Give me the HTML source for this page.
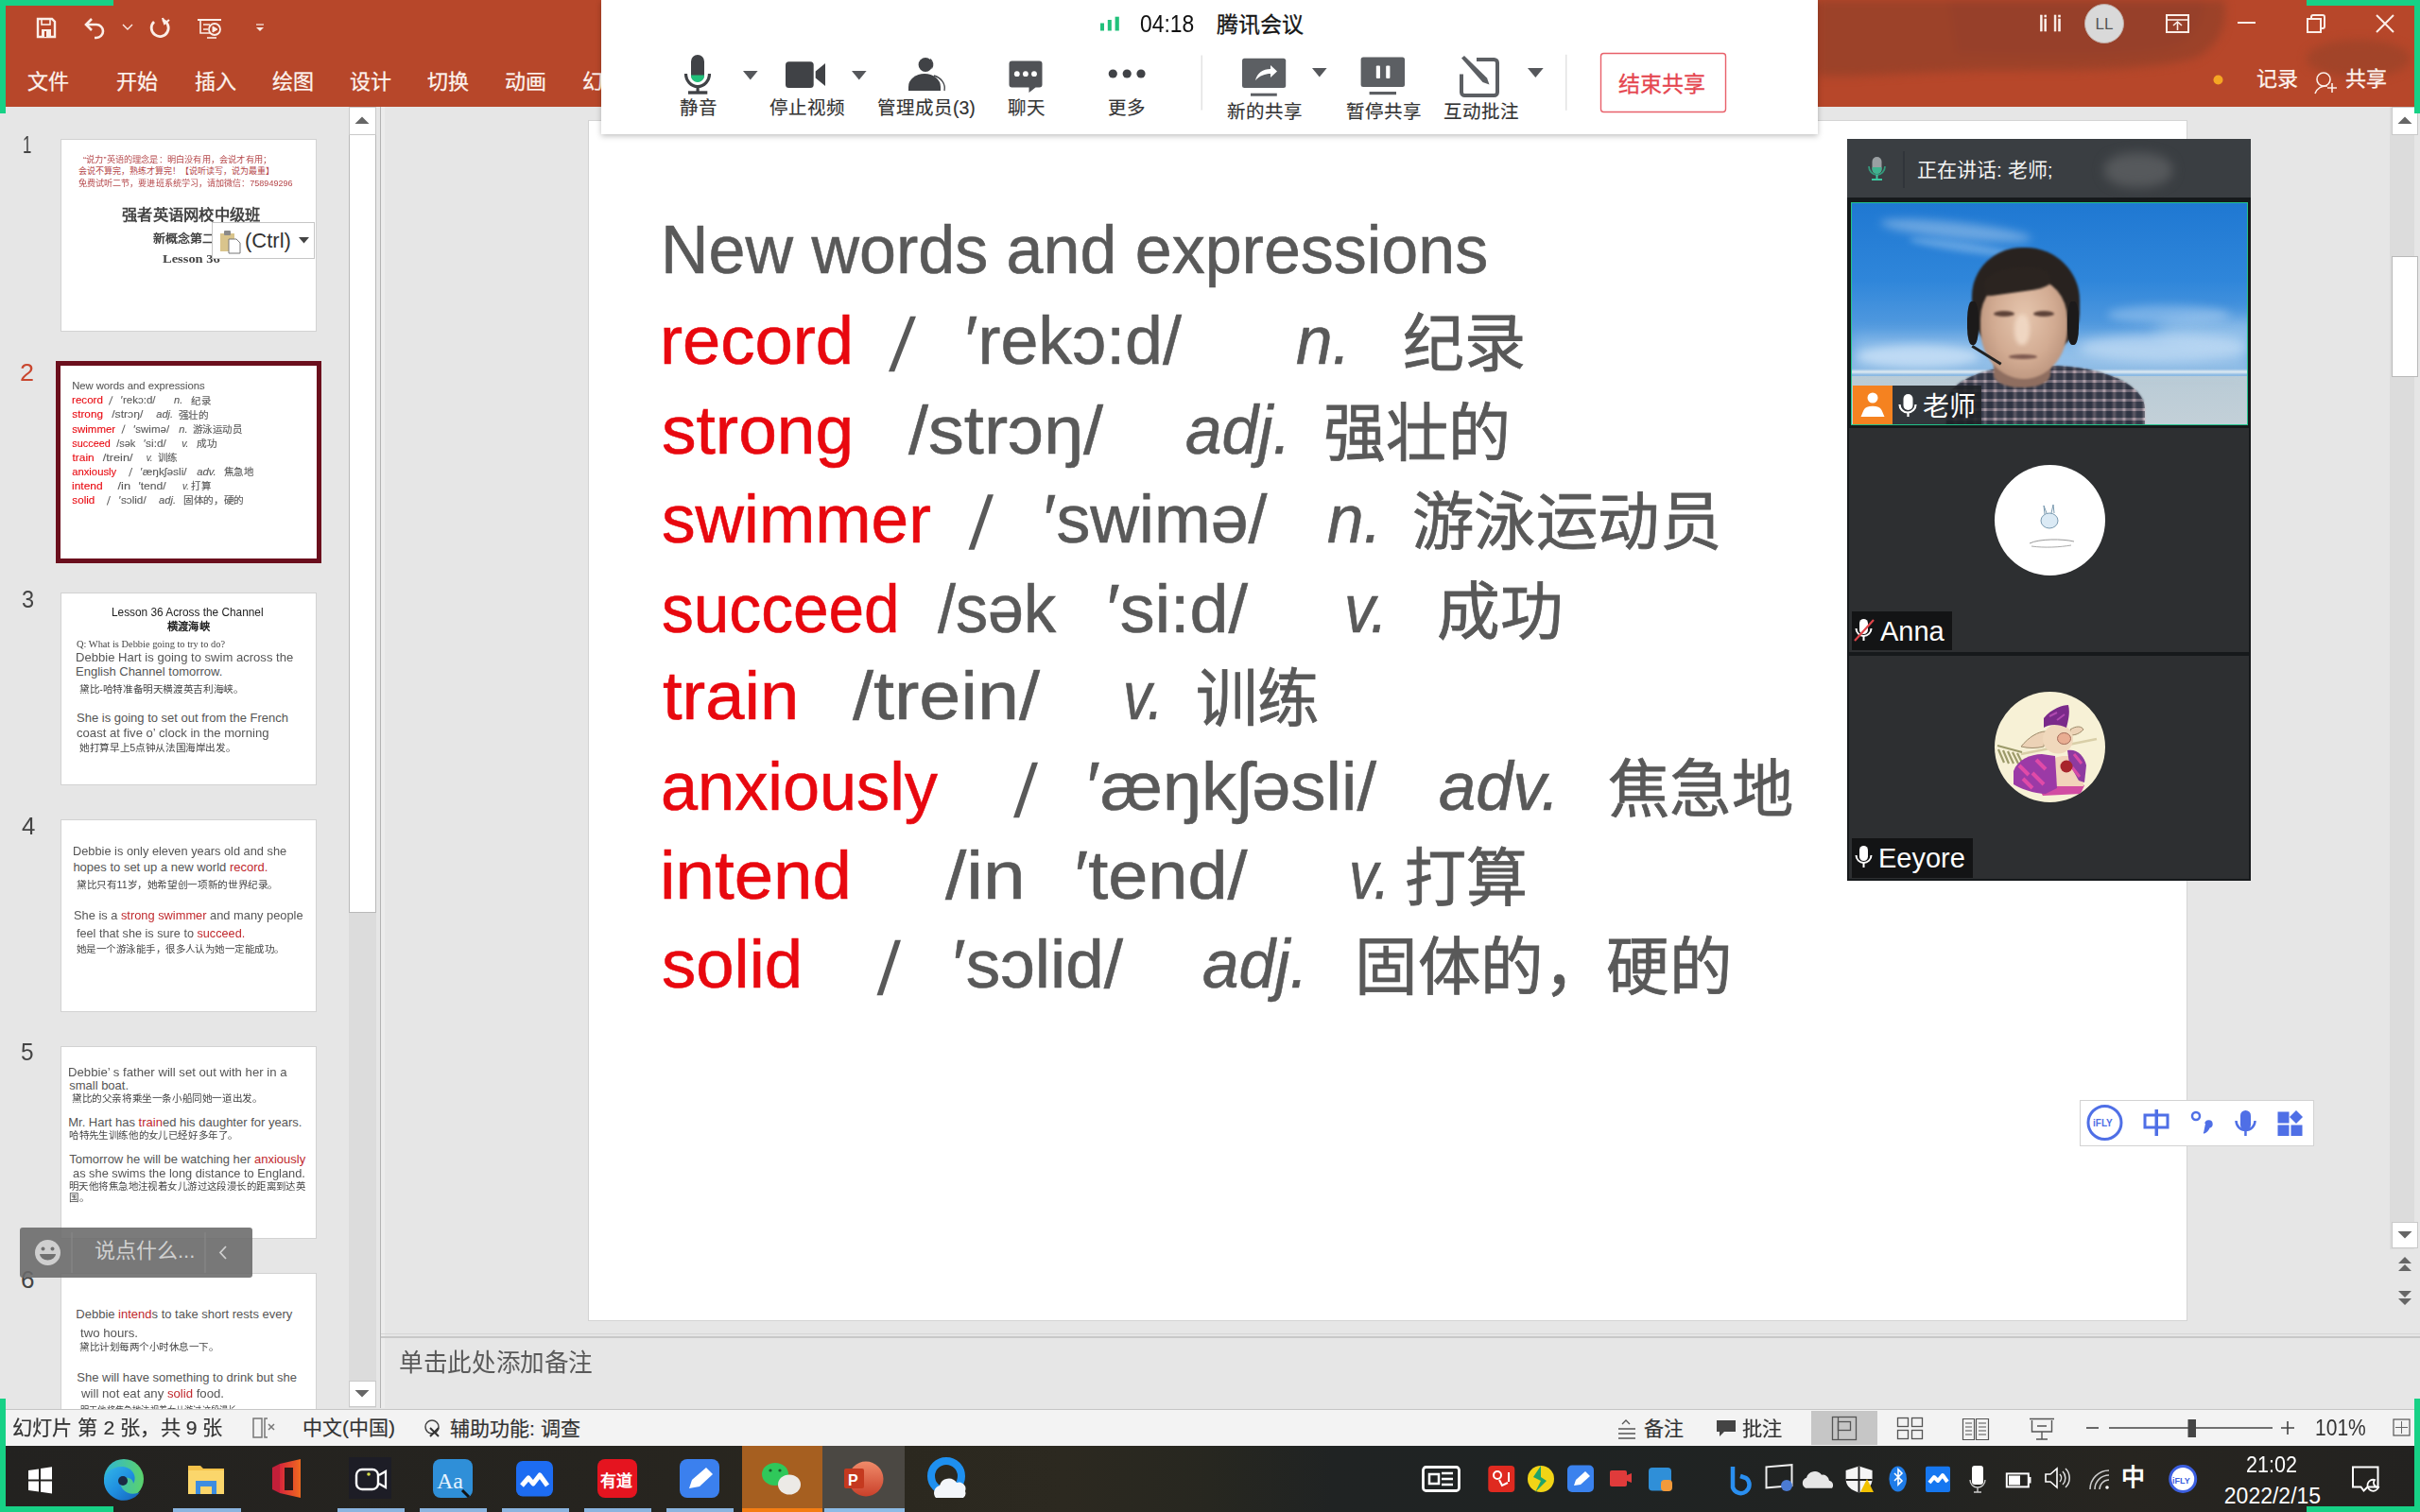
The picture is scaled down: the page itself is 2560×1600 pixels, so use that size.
<!DOCTYPE html>
<html lang="zh-CN"><head><meta charset="utf-8">
<style>
*{margin:0;padding:0;box-sizing:border-box}
html,body{width:2560px;height:1600px;overflow:hidden}
body{position:relative;background:#e6e6e6;font-family:"Liberation Sans",sans-serif;color:#333}
.a{position:absolute}
.t{position:absolute;white-space:nowrap;line-height:1}
/* title bar */
#title{left:0;top:0;width:2560px;height:113px;background:#b7472a}
.green{background:#17d186}
/* slide text */
.st{position:absolute;white-space:nowrap;line-height:1;font-size:72px;transform-origin:0 0;-webkit-text-stroke-width:.6px}
.r{color:#e8080f}
.g{color:#595959}
.cj{-webkit-text-stroke:0.8px #595959}
</style></head><body>
<!-- title bar -->
<div id="title" class="a" style="overflow:hidden">
 <svg class="a" style="left:0;top:0;filter:blur(5px)" width="2560" height="113" viewBox="0 0 2560 113">
  <path d="M1923 -10H2350C2360 20 2350 50 2320 62C2250 80 2130 72 2060 76C2000 78 1960 82 1923 80Z" fill="#9c4229"/>
  <path d="M2060 -10H2330C2335 20 2320 45 2290 52C2220 62 2120 58 2070 56Z" fill="#97402a"/>
  <ellipse cx="2495" cy="62" rx="55" ry="20" fill="#a24429"/>
 </svg>
</div>
<!--TB-->
<svg class="a" style="left:0;top:0" width="2560" height="113" viewBox="0 0 2560 113" fill="none" stroke="#fbeee8" stroke-width="2.2">
 <!-- save -->
 <path d="M40 20h15l3 3v16h-18z" fill="none" stroke-width="2.4"/>
 <rect x="44" y="20" width="9" height="6" stroke-width="1.6"/>
 <rect x="44" y="31" width="10" height="8" fill="#fbeee8" stroke="none"/>
 <rect x="47" y="33" width="2" height="6" fill="#b7472a" stroke="none"/>
 <!-- undo -->
 <path d="M92 26h10a7 7 0 0 1 0 14h-2" stroke-width="2.6"/>
 <path d="M97 20l-6 6 6 6" stroke-width="2.6"/>
 <path d="M130 26l5 5 5-5" stroke-width="1.4"/>
 <!-- redo circle -->
 <path d="M163 23a9 9 0 1 0 9 -2" stroke-width="2.8"/>
 <path d="M172 19l2 6 5-4" stroke-width="2.2"/>
 <!-- slideshow -->
 <path d="M209 21h25" stroke-width="2"/>
 <path d="M212 21v14h10" stroke-width="1.6"/>
 <path d="M215 26h7M215 31h5" stroke-width="1.4"/>
 <circle cx="227" cy="31" r="6" stroke-width="1.8"/>
 <path d="M225 28l5 3-5 3z" fill="#fbeee8" stroke-width="1"/>
 <path d="M219 40h10" stroke-width="1.6"/>
 <path d="M271 26h8" stroke-width="1.2"/><path d="M271 29l4 4 4-4z" fill="#fbeee8" stroke="none"/>
 <!-- right controls -->
 <rect x="2292" y="16" width="23" height="18" stroke-width="2"/>
 <path d="M2292 21h23" stroke-width="1.6"/>
 <path d="M2303.5 23v9M2299 27l4.5-4 4.5 4" stroke-width="1.6"/>
 <path d="M2367 24h19" stroke-width="2"/>
 <rect x="2441" y="20" width="14" height="14" stroke-width="2"/>
 <path d="M2445 20v-2a2 2 0 0 1 2-2h10a2 2 0 0 1 2 2v10a2 2 0 0 1 -2 2h-2" stroke-width="2"/>
 <path d="M2514 16l18 18M2532 16l-18 18" stroke-width="2"/>
 <circle cx="2346.5" cy="84.5" r="5" fill="#f5a623" stroke="none"/>
 <circle cx="2458" cy="84" r="7" stroke-width="1.6"/>
 <path d="M2449 99a12 12 0 0 1 13-8" stroke-width="1.6"/>
 <path d="M2467 88v10M2462 93h10" stroke-width="1.6"/>
</svg>
<div class="t" style="left:29px;top:76px;font-size:22px;color:#fdf3ee;-webkit-text-stroke:.25px #fdf3ee">文件</div>
<div class="t" style="left:123px;top:76px;font-size:22px;color:#fdf3ee;-webkit-text-stroke:.25px #fdf3ee">开始</div>
<div class="t" style="left:206px;top:76px;font-size:22px;color:#fdf3ee;-webkit-text-stroke:.25px #fdf3ee">插入</div>
<div class="t" style="left:288px;top:76px;font-size:22px;color:#fdf3ee;-webkit-text-stroke:.25px #fdf3ee">绘图</div>
<div class="t" style="left:370px;top:76px;font-size:22px;color:#fdf3ee;-webkit-text-stroke:.25px #fdf3ee">设计</div>
<div class="t" style="left:452px;top:76px;font-size:22px;color:#fdf3ee;-webkit-text-stroke:.25px #fdf3ee">切换</div>
<div class="t" style="left:534px;top:76px;font-size:22px;color:#fdf3ee;-webkit-text-stroke:.25px #fdf3ee">动画</div>
<div class="t" style="left:616px;top:76px;font-size:22px;color:#fdf3ee;-webkit-text-stroke:.25px #fdf3ee">幻</div>
<div class="t" style="left:2157px;top:13px;font-size:24px;color:#fdf3ee;-webkit-text-stroke:.6px #fdf3ee;transform:scaleX(.85);transform-origin:0 0">li li</div>
<div class="a" style="left:2205px;top:4px;width:42px;height:42px;border-radius:50%;background:#d9d9d9;color:#555;font-size:17px;border:1px solid #c0a8a0;line-height:42px;text-align:center">LL</div>
<div class="t" style="left:2387px;top:73px;font-size:22px;color:#fdf3ee;-webkit-text-stroke:.25px #fdf3ee">记录</div>
<div class="t" style="left:2481px;top:73px;font-size:22px;color:#fdf3ee;-webkit-text-stroke:.25px #fdf3ee">共享</div>

<!--/TB-->

<!-- thumbnail pane -->
<div id="thumbs" class="a" style="left:0;top:113px;width:402px;height:1379px;background:#e6e6e6"></div>

<!-- main slide -->
<div id="slide" class="a" style="left:623px;top:128px;width:1690px;height:1269px;background:#fff;box-shadow:0 0 0 1px #d4d4d4"></div>

<!--ST-->
<div class="a" style="left:623px;top:128px;width:1690px;height:1269px">
<div class="st g" style="left:76.1px;top:100.1px;font-size:72px;transform:scaleX(0.9720)">New words and expressions</div>
<div class="st r" style="left:75.0px;top:196.1px;font-size:72px;transform:scaleX(1.0049)">record</div>
<svg class="a" style="left:0;top:0;overflow:visible" width="1" height="1"><path d="M317.0 265.3h6.2L346.0 206.8h-6.1z" fill="#595959"/></svg>
<div class="st g" style="left:398.0px;top:196.1px;font-size:72px;transform:scaleX(0.9975)">′rekɔ:d/</div>
<div class="st g" style="left:748.0px;top:196.1px;font-size:72px;font-style:italic;transform:scaleX(0.9600)">n.</div>
<div class="st g cj" style="left:861.0px;top:202.3px;font-size:67px;transform:scaleX(0.9697)">纪录</div>
<div class="st r" style="left:77.0px;top:290.6px;font-size:72px;transform:scaleX(1.0151)">strong</div>
<div class="st g" style="left:338.0px;top:290.6px;font-size:72px;transform:scaleX(1.0509)">/strɔŋ/</div>
<div class="st g" style="left:631.0px;top:290.6px;font-size:72px;font-style:italic;transform:scaleX(0.9619)">adj.</div>
<div class="st g cj" style="left:777.0px;top:296.8px;font-size:67px;transform:scaleX(0.9846)">强壮的</div>
<div class="st r" style="left:77.0px;top:384.6px;font-size:72px;transform:scaleX(0.9895)">swimmer</div>
<svg class="a" style="left:0;top:0;overflow:visible" width="1" height="1"><path d="M401.5 453.8h6.2L428.0 395.3h-6.1z" fill="#595959"/></svg>
<div class="st g" style="left:480.5px;top:384.6px;font-size:72px;transform:scaleX(0.9957)">′swimə/</div>
<div class="st g" style="left:780.6px;top:384.6px;font-size:72px;font-style:italic;transform:scaleX(0.9600)">n.</div>
<div class="st g cj" style="left:871.0px;top:390.8px;font-size:67px;transform:scaleX(0.9760)">游泳运动员</div>
<div class="st r" style="left:77.1px;top:479.6px;font-size:72px;transform:scaleX(0.9385)">succeed</div>
<div class="st g" style="left:369.0px;top:479.6px;font-size:72px;transform:scaleX(0.9470)">/sək</div>
<div class="st g" style="left:547.5px;top:479.6px;font-size:72px;transform:scaleX(1.0241)">′si:d/</div>
<div class="st g" style="left:799.3px;top:479.6px;font-size:72px;font-style:italic;transform:scaleX(0.9078)">v.</div>
<div class="st g cj" style="left:896.6px;top:485.8px;font-size:67px;transform:scaleX(0.9953)">成功</div>
<div class="st r" style="left:78.0px;top:572.1px;font-size:72px;transform:scaleX(1.0295)">train</div>
<div class="st g" style="left:279.0px;top:572.1px;font-size:72px;transform:scaleX(1.0996)">/trein/</div>
<div class="st g" style="left:565.1px;top:572.1px;font-size:72px;font-style:italic;transform:scaleX(0.8422)">v.</div>
<div class="st g cj" style="left:642.0px;top:578.3px;font-size:67px;transform:scaleX(0.9773)">训练</div>
<div class="st r" style="left:76.1px;top:668.1px;font-size:72px;transform:scaleX(0.9759)">anxiously</div>
<svg class="a" style="left:0;top:0;overflow:visible" width="1" height="1"><path d="M449.0 737.3h6.2L475.0 678.8h-6.1z" fill="#595959"/></svg>
<div class="st g" style="left:526.9px;top:668.1px;font-size:72px;transform:scaleX(1.0284)">′æŋkʃəsli/</div>
<div class="st g" style="left:899.0px;top:668.1px;font-size:72px;font-style:italic;transform:scaleX(0.9775)">adv.</div>
<div class="st g cj" style="left:1078.0px;top:674.3px;font-size:67px;transform:scaleX(0.9751)">焦急地</div>
<div class="st r" style="left:74.9px;top:761.6px;font-size:72px;transform:scaleX(1.0344)">intend</div>
<div class="st g" style="left:376.8px;top:761.6px;font-size:72px;transform:scaleX(1.1139)">/in</div>
<div class="st g" style="left:513.9px;top:761.6px;font-size:72px;transform:scaleX(1.0517)">′tend/</div>
<div class="st g" style="left:804.4px;top:761.6px;font-size:72px;font-style:italic;transform:scaleX(0.8574)">v.</div>
<div class="st g cj" style="left:862.5px;top:767.8px;font-size:67px;transform:scaleX(0.9699)">打算</div>
<div class="st r" style="left:77.0px;top:856.1px;font-size:72px;transform:scaleX(1.0068)">solid</div>
<svg class="a" style="left:0;top:0;overflow:visible" width="1" height="1"><path d="M304.5 925.3h6.2L330.0 866.8h-6.1z" fill="#595959"/></svg>
<div class="st g" style="left:385.0px;top:856.1px;font-size:72px;transform:scaleX(1.0140)">′sɔlid/</div>
<div class="st g" style="left:649.0px;top:856.1px;font-size:72px;font-style:italic;transform:scaleX(0.9619)">adj.</div>
<div class="st g cj" style="left:810.0px;top:862.3px;font-size:67px;transform:scaleX(0.9936)">固体的，硬的</div>
</div>
<!--/ST-->
<!--TH-->
<div class="a" style="left:0;top:113px;width:369px;height:1379px;overflow:hidden">
<div class="a" style="left:0;top:-113px;width:369px;height:1492px">
<div class="a" style="left:64px;top:147px;width:271px;height:204px;background:#fff;border:1px solid #d2d2d2"></div>
<div class="a" style="left:64px;top:627px;width:271px;height:204px;background:#fff;border:1px solid #d2d2d2"></div>
<div class="a" style="left:64px;top:867px;width:271px;height:204px;background:#fff;border:1px solid #d2d2d2"></div>
<div class="a" style="left:64px;top:1107px;width:271px;height:204px;background:#fff;border:1px solid #d2d2d2"></div>
<div class="a" style="left:64px;top:1347px;width:271px;height:204px;background:#fff;border:1px solid #d2d2d2"></div>
<div class="a" style="left:59px;top:382px;width:281px;height:214px;border:5px solid #6b0f1d;background:#fff"></div>
<div class="a" style="left:64px;top:386px;width:1690px;height:1269px;transform:scale(0.1604);transform-origin:0 0">
<div class="st g" style="left:76.1px;top:100.1px;font-size:72px;transform:scaleX(0.9720)">New words and expressions</div>
<div class="st r" style="left:75.0px;top:196.1px;font-size:72px;transform:scaleX(1.0049)">record</div>
<svg class="a" style="left:0;top:0;overflow:visible" width="1" height="1"><path d="M317.0 265.3h6.2L346.0 206.8h-6.1z" fill="#595959"/></svg>
<div class="st g" style="left:398.0px;top:196.1px;font-size:72px;transform:scaleX(0.9975)">′rekɔ:d/</div>
<div class="st g" style="left:748.0px;top:196.1px;font-size:72px;font-style:italic;transform:scaleX(0.9600)">n.</div>
<div class="st g cj" style="left:861.0px;top:202.3px;font-size:67px;transform:scaleX(0.9697)">纪录</div>
<div class="st r" style="left:77.0px;top:290.6px;font-size:72px;transform:scaleX(1.0151)">strong</div>
<div class="st g" style="left:338.0px;top:290.6px;font-size:72px;transform:scaleX(1.0509)">/strɔŋ/</div>
<div class="st g" style="left:631.0px;top:290.6px;font-size:72px;font-style:italic;transform:scaleX(0.9619)">adj.</div>
<div class="st g cj" style="left:777.0px;top:296.8px;font-size:67px;transform:scaleX(0.9846)">强壮的</div>
<div class="st r" style="left:77.0px;top:384.6px;font-size:72px;transform:scaleX(0.9895)">swimmer</div>
<svg class="a" style="left:0;top:0;overflow:visible" width="1" height="1"><path d="M401.5 453.8h6.2L428.0 395.3h-6.1z" fill="#595959"/></svg>
<div class="st g" style="left:480.5px;top:384.6px;font-size:72px;transform:scaleX(0.9957)">′swimə/</div>
<div class="st g" style="left:780.6px;top:384.6px;font-size:72px;font-style:italic;transform:scaleX(0.9600)">n.</div>
<div class="st g cj" style="left:871.0px;top:390.8px;font-size:67px;transform:scaleX(0.9760)">游泳运动员</div>
<div class="st r" style="left:77.1px;top:479.6px;font-size:72px;transform:scaleX(0.9385)">succeed</div>
<div class="st g" style="left:369.0px;top:479.6px;font-size:72px;transform:scaleX(0.9470)">/sək</div>
<div class="st g" style="left:547.5px;top:479.6px;font-size:72px;transform:scaleX(1.0241)">′si:d/</div>
<div class="st g" style="left:799.3px;top:479.6px;font-size:72px;font-style:italic;transform:scaleX(0.9078)">v.</div>
<div class="st g cj" style="left:896.6px;top:485.8px;font-size:67px;transform:scaleX(0.9953)">成功</div>
<div class="st r" style="left:78.0px;top:572.1px;font-size:72px;transform:scaleX(1.0295)">train</div>
<div class="st g" style="left:279.0px;top:572.1px;font-size:72px;transform:scaleX(1.0996)">/trein/</div>
<div class="st g" style="left:565.1px;top:572.1px;font-size:72px;font-style:italic;transform:scaleX(0.8422)">v.</div>
<div class="st g cj" style="left:642.0px;top:578.3px;font-size:67px;transform:scaleX(0.9773)">训练</div>
<div class="st r" style="left:76.1px;top:668.1px;font-size:72px;transform:scaleX(0.9759)">anxiously</div>
<svg class="a" style="left:0;top:0;overflow:visible" width="1" height="1"><path d="M449.0 737.3h6.2L475.0 678.8h-6.1z" fill="#595959"/></svg>
<div class="st g" style="left:526.9px;top:668.1px;font-size:72px;transform:scaleX(1.0284)">′æŋkʃəsli/</div>
<div class="st g" style="left:899.0px;top:668.1px;font-size:72px;font-style:italic;transform:scaleX(0.9775)">adv.</div>
<div class="st g cj" style="left:1078.0px;top:674.3px;font-size:67px;transform:scaleX(0.9751)">焦急地</div>
<div class="st r" style="left:74.9px;top:761.6px;font-size:72px;transform:scaleX(1.0344)">intend</div>
<div class="st g" style="left:376.8px;top:761.6px;font-size:72px;transform:scaleX(1.1139)">/in</div>
<div class="st g" style="left:513.9px;top:761.6px;font-size:72px;transform:scaleX(1.0517)">′tend/</div>
<div class="st g" style="left:804.4px;top:761.6px;font-size:72px;font-style:italic;transform:scaleX(0.8574)">v.</div>
<div class="st g cj" style="left:862.5px;top:767.8px;font-size:67px;transform:scaleX(0.9699)">打算</div>
<div class="st r" style="left:77.0px;top:856.1px;font-size:72px;transform:scaleX(1.0068)">solid</div>
<svg class="a" style="left:0;top:0;overflow:visible" width="1" height="1"><path d="M304.5 925.3h6.2L330.0 866.8h-6.1z" fill="#595959"/></svg>
<div class="st g" style="left:385.0px;top:856.1px;font-size:72px;transform:scaleX(1.0140)">′sɔlid/</div>
<div class="st g" style="left:649.0px;top:856.1px;font-size:72px;font-style:italic;transform:scaleX(0.9619)">adj.</div>
<div class="st g cj" style="left:810.0px;top:862.3px;font-size:67px;transform:scaleX(0.9936)">固体的，硬的</div>
</div>
<div class="t" style="left:23.7px;top:140.2px;font-size:26px;color:#444;transform:scaleX(0.6462);transform-origin:0 0;">1</div>
<div class="t" style="left:21.0px;top:380.5px;font-size:26px;color:#c9472f;transform:scaleX(1.0385);transform-origin:0 0;">2</div>
<div class="t" style="left:23.0px;top:621.0px;font-size:26px;color:#444;transform:scaleX(0.9071);transform-origin:0 0;">3</div>
<div class="t" style="left:22.5px;top:860.6px;font-size:26px;color:#444;transform:scaleX(0.9929);transform-origin:0 0;">4</div>
<div class="t" style="left:22.1px;top:1100.0px;font-size:26px;color:#444;transform:scaleX(0.9385);transform-origin:0 0;">5</div>
<div class="t" style="left:22.0px;top:1340.7px;font-size:26px;color:#444;">6</div>
<div class="t" style="left:87.5px;top:164.6px;font-size:9px;color:#b5474a;transform:scaleX(1.0214);transform-origin:0 0;">“说力”英语的理念是：明白没有用，会说才有用；</div>
<div class="t" style="left:82.9px;top:177.1px;font-size:9px;color:#b5474a;">会说不算完，熟练才算完！【说听读写，说为最重】</div>
<div class="t" style="left:82.9px;top:190.0px;font-size:9px;color:#b5474a;transform:scaleX(1.0069);transform-origin:0 0;">免费试听二节，要进班系统学习，请加微信：758949296</div>
<div class="t" style="left:129.3px;top:220.2px;font-size:16px;color:#444;font-weight:700;transform:scaleX(1.0187);transform-origin:0 0;">强者英语网校中级班</div>
<div class="t" style="left:161.6px;top:247.3px;font-size:12px;color:#444;font-weight:700;transform:scaleX(1.0890);transform-origin:0 0;">新概念第二册</div>
<div class="t" style="left:171.9px;top:267.5px;font-size:12px;color:#444;font-weight:700;font-family:'Liberation Serif';transform:scaleX(1.2077);transform-origin:0 0;">Lesson 36</div>
<div class="t" style="left:118.1px;top:640.5px;font-size:13px;color:#222;transform:scaleX(0.9105);transform-origin:0 0;">Lesson 36 Across the Channel</div>
<div class="t" style="left:177.0px;top:657.5px;font-size:11px;color:#222;font-weight:700;transform:scaleX(1.0217);transform-origin:0 0;">横渡海峡</div>
<div class="t" style="left:81.0px;top:676.7px;font-size:10px;color:#444;font-family:'Liberation Serif';transform:scaleX(1.0406);transform-origin:0 0;">Q: What is Debbie going to try to do?</div>
<div class="t" style="left:80.0px;top:689.0px;font-size:13px;color:#555;transform:scaleX(1.0052);transform-origin:0 0;">Debbie Hart is going to swim across the</div>
<div class="t" style="left:80.0px;top:704.4px;font-size:13px;color:#555;">English Channel tomorrow.</div>
<div class="t" style="left:84.3px;top:724.6px;font-size:10px;color:#444;transform:scaleX(1.0615);transform-origin:0 0;">黛比-哈特准备明天横渡英吉利海峡。</div>
<div class="t" style="left:81.0px;top:753.0px;font-size:13px;color:#555;">She is going to set out from the French</div>
<div class="t" style="left:81.0px;top:769.0px;font-size:13px;color:#555;transform:scaleX(1.0083);transform-origin:0 0;">coast at five o’  clock in the morning</div>
<div class="t" style="left:84.0px;top:786.8px;font-size:10px;color:#444;transform:scaleX(1.0631);transform-origin:0 0;">她打算早上5点钟从法国海岸出发。</div>
<div class="t" style="left:76.7px;top:893.6px;font-size:13px;color:#555;transform:scaleX(0.9839);transform-origin:0 0;">Debbie is only eleven years old and she</div>
<div class="t" style="left:77.4px;top:910.5px;font-size:13px;color:#555;">hopes to set up a new world <span style="color:#c0282d">record.</span></div>
<div class="t" style="left:81.0px;top:931.6px;font-size:10px;color:#444;transform:scaleX(1.0634);transform-origin:0 0;">黛比只有11岁，她希望创一项新的世界纪录。</div>
<div class="t" style="left:77.7px;top:962.4px;font-size:13px;color:#555;transform:scaleX(0.9872);transform-origin:0 0;">She is a <span style="color:#c0282d">strong swimmer</span> and many people</div>
<div class="t" style="left:81.0px;top:980.5px;font-size:13px;color:#555;transform:scaleX(0.9747);transform-origin:0 0;">feel that she is sure to <span style="color:#c0282d">succeed.</span></div>
<div class="t" style="left:81.0px;top:1000.0px;font-size:10px;color:#444;transform:scaleX(1.0456);transform-origin:0 0;">她是一个游泳能手，很多人认为她一定能成功。</div>
<div class="t" style="left:72.2px;top:1128.2px;font-size:13px;color:#555;transform:scaleX(1.0127);transform-origin:0 0;">Debbie’  s father will set out with her in a</div>
<div class="t" style="left:73.2px;top:1141.8px;font-size:13px;color:#555;">small boat.</div>
<div class="t" style="left:76.0px;top:1157.7px;font-size:10px;color:#444;transform:scaleX(1.0598);transform-origin:0 0;">黛比的父亲将乘坐一条小船同她一道出发。</div>
<div class="t" style="left:72.2px;top:1181.0px;font-size:13px;color:#555;">Mr. Hart has <span style="color:#c0282d">train</span>ed his daughter for years.</div>
<div class="t" style="left:73.2px;top:1197.0px;font-size:10px;color:#444;transform:scaleX(1.0500);transform-origin:0 0;">哈特先生训练他的女儿已经好多年了。</div>
<div class="t" style="left:73.2px;top:1219.7px;font-size:13px;color:#555;">Tomorrow he will be watching her <span style="color:#c0282d">anxiously</span></div>
<div class="t" style="left:76.7px;top:1234.7px;font-size:13px;color:#555;transform:scaleX(0.9863);transform-origin:0 0;">as she swims the long distance to England.</div>
<div class="t" style="left:73.2px;top:1251.0px;font-size:10px;color:#444;transform:scaleX(1.0429);transform-origin:0 0;">明天他将焦急地注视着女儿游过这段漫长的距离到达英</div>
<div class="t" style="left:73.2px;top:1262.9px;font-size:10px;color:#444;transform:scaleX(1.0571);transform-origin:0 0;">国。</div>
<div class="t" style="left:80.3px;top:1384.3px;font-size:13px;color:#555;">Debbie <span style="color:#c0282d">intend</span>s to take short rests every</div>
<div class="t" style="left:84.6px;top:1403.5px;font-size:13px;color:#555;transform:scaleX(1.0175);transform-origin:0 0;">two hours.</div>
<div class="t" style="left:84.0px;top:1421.0px;font-size:10px;color:#444;transform:scaleX(1.0522);transform-origin:0 0;">黛比计划每两个小时休息一下。</div>
<div class="t" style="left:81.3px;top:1451.3px;font-size:13px;color:#555;">She will have something to drink but she</div>
<div class="t" style="left:85.6px;top:1468.4px;font-size:13px;color:#555;transform:scaleX(1.0144);transform-origin:0 0;">will not eat any <span style="color:#c0282d">solid</span> food.</div>
<div class="t" style="left:84.6px;top:1488.0px;font-size:10px;color:#444;transform:scaleX(0.9189);transform-origin:0 0;">明天他将焦急地注视着女儿游过这段漫长</div>
<div class="a" style="left:223.6px;top:235px;width:109px;height:39px;background:#fff;border:1px solid #c6c6c6"></div>
<svg class="a" style="left:230px;top:242px" width="30" height="28" viewBox="0 0 30 28"><rect x="3" y="5" width="15" height="19" fill="#d9c48c"/><rect x="7" y="2" width="7" height="5" rx="1" fill="#8a8a8a"/><path d="M12 11h8l4 4v11h-12z" fill="#fff" stroke="#777" stroke-width="1"/></svg>
<div class="t" style="left:259px;top:244px;font-size:22px;color:#333">(Ctrl)</div>
<svg class="a" style="left:316px;top:251px" width="12" height="8" viewBox="0 0 12 8"><path d="M0 0h11l-5.5 6.5z" fill="#444"/></svg>
</div></div>
<div class="a" style="left:21px;top:1299px;width:246px;height:53px;background:rgba(105,105,105,.88);border-radius:3px"></div>
<svg class="a" style="left:21px;top:1299px" width="246" height="53" viewBox="21 1299 246 53">
<circle cx="50.5" cy="1325.5" r="13.5" fill="#cfcfcf"/><circle cx="45.5" cy="1321.5" r="2" fill="#707070"/><circle cx="55.5" cy="1321.5" r="2" fill="#707070"/>
<path d="M42 1327h17a8.5 6.5 0 0 1 -17 0z" fill="#707070"/>
<rect x="75.5" y="1304" width="1" height="43" fill="#8a8a8a"/><rect x="216.5" y="1304" width="1" height="43" fill="#8a8a8a"/>
<path d="M239 1319l-6 6.5 6 6.5" fill="none" stroke="#cfcfcf" stroke-width="1.8"/>
</svg>
<div class="t" style="left:100px;top:1313px;font-size:22px;color:#d0d0d0">说点什么...</div>
<div class="a" style="left:369px;top:113px;width:29px;height:1377px;background:#dcdcdc"></div>
<div class="a" style="left:369px;top:113px;width:29px;height:30px;background:#fff;border:1px solid #c9c9c9"></div>
<svg class="a" style="left:374px;top:121px" width="18" height="12" viewBox="0 0 18 12"><path d="M1.5 10h15l-7.5-7.5z" fill="#666"/></svg>
<div class="a" style="left:369px;top:143px;width:29px;height:823px;background:#fff;border:1px solid #b9b9b9;border-top:none"></div>
<div class="a" style="left:369px;top:1461px;width:29px;height:28px;background:#fff;border:1px solid #c9c9c9"></div>
<svg class="a" style="left:374px;top:1469px" width="18" height="12" viewBox="0 0 18 12"><path d="M1.5 2h15l-7.5 7.5z" fill="#666"/></svg>
<div class="a" style="left:402px;top:113px;width:1px;height:1377px;background:#b3b3b3"></div>
<div class="a" style="left:403px;top:113px;width:4px;height:1377px;background:#ececec"></div>

<!--/TH-->
<!--RS-->
<div class="a" style="left:2528px;top:113px;width:26px;height:1300px;background:#dcdcdc"></div>
<div class="a" style="left:2530px;top:113px;width:28px;height:30px;background:#fff;border:1px solid #c9c9c9"></div>
<svg class="a" style="left:2535px;top:121px" width="18" height="12" viewBox="0 0 18 12"><path d="M1.5 10h15l-7.5-7.5z" fill="#666"/></svg>
<div class="a" style="left:2530px;top:271px;width:28px;height:128px;background:#fff;border:1px solid #b9b9b9"></div>
<div class="a" style="left:2530px;top:1293px;width:28px;height:28px;background:#fff;border:1px solid #c9c9c9"></div>
<svg class="a" style="left:2535px;top:1301px" width="18" height="12" viewBox="0 0 18 12"><path d="M1.5 2h15l-7.5 7.5z" fill="#666"/></svg>
<div class="a" style="left:2528px;top:1322px;width:30px;height:91px;background:#e6e6e6"></div>
<svg class="a" style="left:2530px;top:1325px" width="28" height="80" viewBox="0 0 28 80">
 <path d="M7 12l7-7 7 7zM7 20l7-7 7 7z" fill="#666"/>
 <path d="M7 41h14l-7 7zM7 49h14l-7 7z" fill="#666"/>
</svg>
<div class="a" style="left:2200px;top:1164px;width:248px;height:49px;background:#fff;border:1px solid #d2d2d2"></div>
<svg class="a" style="left:2200px;top:1164px" width="248" height="49" viewBox="2200 1164 248 49">
 <circle cx="2226.5" cy="1188" r="17.5" fill="none" stroke="#4f6fe6" stroke-width="3"/>
 <text x="2214" y="1192" font-family="Liberation Sans" font-size="10" font-weight="bold" fill="#4f6fe6">iFLY</text>
 <rect x="2269" y="1180" width="24" height="13" fill="none" stroke="#4f6fe6" stroke-width="3"/>
 <rect x="2279.5" y="1174" width="3.5" height="28" fill="#4f6fe6"/>
 <circle cx="2323" cy="1181" r="4" fill="none" stroke="#4f6fe6" stroke-width="2.5"/>
 <path d="M2333 1189a3.5 3.5 0 1 1 4 4c-1 3-3 5-6 6" fill="#4f6fe6" stroke="#4f6fe6" stroke-width="1.5"/>
 <rect x="2370" y="1175" width="11" height="21" rx="5.5" fill="#4f6fe6"/>
 <path d="M2365.5 1186a10 10 0 0 0 20 0" fill="none" stroke="#4f6fe6" stroke-width="2.5"/>
 <rect x="2374.2" y="1196" width="2.5" height="6" fill="#4f6fe6"/>
 <rect x="2409.5" y="1176.5" width="12" height="12" fill="#4f6fe6"/>
 <path d="M2429 1175l7 7-7 7-7-7z" fill="#4f6fe6"/>
 <rect x="2409.5" y="1190.5" width="12" height="11.5" fill="#4f6fe6"/>
 <rect x="2423.5" y="1190.5" width="12" height="11.5" fill="#4f6fe6"/>
</svg>

<!--/RS-->
<!-- notes -->

<!-- status bar -->
<!--SB-->
<div class="a" style="left:0;top:1491px;width:2560px;height:1px;background:#c6c6c6"></div>
<div class="a" style="left:0;top:1492px;width:2560px;height:38px;background:#f3f3f3"></div>
<div class="a" style="left:1916px;top:1493px;width:70px;height:36px;background:#c6c6c6"></div>
<svg class="a" style="left:0;top:1492px" width="2560" height="38" viewBox="0 1492 2560 38" fill="none" stroke="#444" stroke-width="1.5">
 <path d="M268 1501h9v20h-9zM283 1501h-3v20h3" stroke="#777"/>
 <path d="M284 1507l6 6M290 1507l-6 6" stroke="#777"/>
 <circle cx="457" cy="1510" r="7" stroke="#444"/>
 <path d="M455 1511l9 9M464 1511l-9 9" stroke="#333" stroke-width="2"/>
 <path d="M1716 1507l4-4 4 4M1712 1512h18M1712 1517h18M1712 1522h18" stroke="#555" stroke-width="1.3"/>
 <path d="M1816 1503h20v12h-12l-5 5v-5h-3z" fill="#444" stroke="none"/>
 <rect x="1938.5" y="1499.5" width="25" height="24" stroke="#555" stroke-width="1.3"/>
 <rect x="1944.5" y="1504.5" width="13" height="9" stroke="#555" stroke-width="1.3"/>
 <path d="M1944.5 1499.5v24" stroke="#555" stroke-width="1.3"/>
 <rect x="2007.5" y="1500.5" width="11" height="9" stroke="#555" stroke-width="1.3"/><rect x="2022.5" y="1500.5" width="11" height="9" stroke="#555" stroke-width="1.3"/>
 <rect x="2007.5" y="1513.5" width="11" height="9" stroke="#555" stroke-width="1.3"/><rect x="2022.5" y="1513.5" width="11" height="9" stroke="#555" stroke-width="1.3"/>
 <path d="M2076.5 1501.5h12v22h-12zM2090.5 1501.5h13v22h-13zM2079 1506h7M2079 1510h7M2079 1514h7M2079 1518h7M2093 1506h8M2093 1510h8M2093 1514h8M2093 1518h8" stroke="#555" stroke-width="1.2"/>
 <path d="M2147 1501.5h26M2149.5 1503v12h21v-12M2160 1515v8M2154 1523h12M2155 1509h10" stroke="#555" stroke-width="1.4"/>
 <path d="M2207 1511h13" stroke="#444" stroke-width="1.6"/>
 <path d="M2231 1511h173" stroke="#444" stroke-width="1.6"/>
 <rect x="2314.5" y="1502" width="8.5" height="19" fill="#444" stroke="none"/>
 <path d="M2413 1511h14M2420 1504v14" stroke="#444" stroke-width="1.6"/>
 <rect x="2532" y="1502" width="17" height="17" stroke="#555" stroke-width="1.2"/>
 <path d="M2540.5 1504v13M2534 1510.5h13" stroke="#666" stroke-width="1"/>
</svg>
<div class="t" style="left:13.0px;top:1500.2px;font-size:21px;color:#333;transform:scaleX(1.0089);transform-origin:0 0;-webkit-text-stroke:.2px #333;">幻灯片 第 2 张，共 9 张</div>
<div class="t" style="left:320.0px;top:1500.2px;font-size:21px;color:#333;-webkit-text-stroke:.2px #333;">中文(中国)</div>
<div class="t" style="left:476.0px;top:1500.7px;font-size:21px;color:#333;-webkit-text-stroke:.2px #333;">辅助功能: 调查</div>
<div class="t" style="left:1739.0px;top:1500.7px;font-size:21px;color:#333;-webkit-text-stroke:.2px #333;">备注</div>
<div class="t" style="left:1843.0px;top:1500.7px;font-size:21px;color:#333;transform:scaleX(1.0119);transform-origin:0 0;-webkit-text-stroke:.2px #333;">批注</div>
<div class="t" style="left:2449.1px;top:1500.0px;font-size:23px;color:#333;transform:scaleX(0.9150);transform-origin:0 0;">101%</div>
<div class="t" style="left:422.0px;top:1429.0px;font-size:26px;color:#595959;transform:scaleX(0.9856);transform-origin:0 0;">单击此处添加备注</div>
<div class="a" style="left:403px;top:1411px;width:2157px;height:1px;background:#d6d6d6"></div>
<div class="a" style="left:403px;top:1414px;width:2157px;height:2px;background:#c8c8c8"></div>

<!--/SB-->

<!-- taskbar -->
<!--TK-->
<div class="a" style="left:0;top:1530px;width:2560px;height:70px;background:linear-gradient(90deg,#232220 0%,#26241f 25%,#2b281f 37%,#2c2920 44%,#272720 50%,#202323 55%,#1f2323 65%,#212322 76%,#272520 88%,#232220 100%)"></div>
<div class="a" style="left:369px;top:1542px;width:45px;height:44px;background:#1d1d26"></div>
<div class="a" style="left:785px;top:1530px;width:85px;height:70px;background:#a65f20"></div>
<div class="a" style="left:870px;top:1530px;width:87px;height:70px;background:#4b4843"></div>
<div class="a" style="left:785px;top:1596px;width:85px;height:4px;background:#f57d12"></div>
<div class="a" style="left:872px;top:1596px;width:85px;height:4px;background:#8dbbe6"></div>
<div class="a" style="left:182.5px;top:1596px;width:72px;height:4px;background:#8ab4df"></div>
<div class="a" style="left:357px;top:1596px;width:71px;height:4px;background:#8ab4df"></div>
<div class="a" style="left:444px;top:1596px;width:71px;height:4px;background:#8ab4df"></div>
<div class="a" style="left:531px;top:1596px;width:71px;height:4px;background:#8ab4df"></div>
<div class="a" style="left:618px;top:1596px;width:71px;height:4px;background:#8ab4df"></div>
<div class="a" style="left:705px;top:1596px;width:71px;height:4px;background:#8ab4df"></div>
<svg class="a" style="left:0;top:1530px" width="2560" height="70" viewBox="0 1530 2560 70">
 <defs>
  <linearGradient id="edg" x1="0" y1="0" x2="1" y2="1"><stop offset="0" stop-color="#33b7e8"/><stop offset=".5" stop-color="#1f8fe0"/><stop offset="1" stop-color="#1560b8"/></linearGradient>
  <linearGradient id="edg2" x1="0" y1="0" x2="1" y2="0"><stop offset="0" stop-color="#2fb5d6"/><stop offset="1" stop-color="#5bd36b"/></linearGradient>
  <linearGradient id="off" x1="0" y1="0" x2="1" y2="0"><stop offset="0" stop-color="#d8263a"/><stop offset="1" stop-color="#f06a1f"/></linearGradient>
  <linearGradient id="ppt" x1="0" y1="0" x2="0" y2="1"><stop offset="0" stop-color="#f08b6a"/><stop offset="1" stop-color="#c9402a"/></linearGradient>
 </defs>
 <!-- windows -->
 <path d="M30 1556l11-1.6v11h-11zM43 1554l12-1.7v13.2h-12zM30 1567.5h11v11l-11-1.5zM43 1567.5h12v13l-12-1.7z" fill="#fff"/>
 <!-- edge -->
 <circle cx="131" cy="1565" r="21" fill="url(#edg2)"/>
 <path d="M110 1568a21 21 0 0 0 38 11c-6 3-14 2-18-3-4-5-3-11 2-12 5-1 9 2 9 6 5-8-2-18-12-18-12 0-19 8-19 16z" fill="url(#edg)"/>
 <circle cx="130" cy="1567" r="5" fill="#1b2a45"/>
 <!-- explorer -->
 <path d="M199 1551h13l3 3h22v27h-38z" fill="#f4c24a"/>
 <rect x="199" y="1556" width="38" height="25" fill="#fbd66b"/>
 <path d="M207 1581v-14h22v14h-5v-8h-12v8z" fill="#3d8de0"/>
 <!-- office -->
 <path d="M296 1549l22-5v41l-22-5z" fill="url(#off)"/>
 <path d="M288 1553l8-4v31l-8-4z" fill="#c21f39"/>
 <rect x="301" y="1553" width="9" height="24" fill="#2a1a18"/>
 <!-- camera -->
 <rect x="377" y="1555" width="23" height="21" rx="6" fill="none" stroke="#fff" stroke-width="2.4"/>
 <path d="M401 1561l7-4v17l-7-4" fill="none" stroke="#fff" stroke-width="2.2"/>
 <circle cx="390" cy="1560" r="1.8" fill="#d7e04a"/>
 <!-- dict -->
 <rect x="458" y="1544" width="42" height="41" rx="8" fill="#2f8fd8"/>
 <text x="462" y="1575" font-family="Liberation Serif" font-size="24" fill="#e8f4ff">Aa</text>
 <path d="M489 1577l7 7" stroke="#111" stroke-width="3"/>
 <!-- lark -->
 <rect x="546" y="1546" width="39" height="37.5" rx="7" fill="#1d6cf2"/>
 <path d="M552 1572l7-8 5 6 7-9 8 11" fill="none" stroke="#fff" stroke-width="5" stroke-linejoin="round"/>
 <!-- youdao -->
 <rect x="632" y="1544" width="42" height="41" rx="8" fill="#e5141f"/>
 <text x="635" y="1573" font-size="17" font-weight="bold" fill="#fff">有道</text>
 <!-- pen -->
 <rect x="719" y="1544" width="42" height="41" rx="8" fill="#3b80ee"/>
 <path d="M729 1575l3-9 15-13 7 7-14 13z" fill="#fff"/>
 <!-- wechat -->
 <ellipse cx="820" cy="1560" rx="14" ry="12" fill="#2fc85a"/>
 <ellipse cx="835" cy="1571" rx="12" ry="10.5" fill="#eceae6"/>
 <circle cx="815" cy="1556" r="1.6" fill="#1a5a2a"/><circle cx="825" cy="1556" r="1.6" fill="#1a5a2a"/>
 <!-- ppt -->
 <circle cx="916" cy="1565" r="18.5" fill="url(#ppt)"/>
 <rect x="893" y="1554" width="21" height="21" rx="2" fill="#c4391f"/>
 <text x="897" y="1572" font-size="16" font-weight="bold" fill="#fff">P</text>
 <!-- q cloud -->
 <circle cx="1001" cy="1562" r="16" fill="none" stroke="#1e90f0" stroke-width="8"/>
 <path d="M990 1585a8 8 0 0 1 4-13 10 10 0 0 1 18-3 7 7 0 0 1 9 9 6 6 0 0 1 -2 7z" fill="#f3f6fa"/>
 <!-- tray -->
 <rect x="1505.5" y="1552.5" width="38" height="25" rx="3" fill="none" stroke="#fff" stroke-width="2.8"/>
 <rect x="1512" y="1560" width="10" height="10" fill="none" stroke="#fff" stroke-width="2.5"/>
 <path d="M1525 1559h12M1525 1565h12M1525 1571h12" stroke="#fff" stroke-width="2.5"/>
 <rect x="1574.3" y="1551" width="28" height="28" rx="4" fill="#df2a20"/>
 <circle cx="1584" cy="1561" r="4" fill="none" stroke="#fff" stroke-width="2"/>
 <path d="M1586 1566l3 6 6-3M1596 1558v10" fill="none" stroke="#fff" stroke-width="2"/>
 <circle cx="1630" cy="1565" r="14" fill="#f1d416"/>
 <path d="M1630 1551l-8 12 8 4-6 12 12-12-6-4z" fill="#1fa36a"/>
 <rect x="1658" y="1550.5" width="28" height="28.5" rx="5" fill="#3a82ee"/>
 <path d="M1665 1572l2-6 10-9 5 5-10 9z" fill="#fff"/>
 <rect x="1703" y="1556" width="18" height="17" rx="2" fill="#e03b3b"/>
 <path d="M1721 1561l5-2v10l-5-2z" fill="#e03b3b"/>
 <rect x="1744" y="1553" width="24" height="24.5" rx="4" fill="#2f8fd8"/>
 <rect x="1757" y="1566" width="12" height="12" rx="4" fill="#f39a3a"/>
 <path d="M1833 1552v22a9 9 0 1 0 14-10l-6-2" fill="none" stroke="#2a8ff0" stroke-width="4.5"/>
 <rect x="1868.5" y="1552.5" width="27" height="22" fill="none" stroke="#eee" stroke-width="2" transform="skewY(-5)" transform-origin="1868 1552"/>
 <circle cx="1890" cy="1572" r="6" fill="#4b7bd4"/>
 <path d="M1910 1574.7a6 6 0 0 1 1-11 9 9 0 0 1 16-3 7 7 0 0 1 8 6 5 5 0 0 1 3 8z" fill="#e6e6e6"/>
 <path d="M1952.6 1556l14-4.5 14 4.5v9c0 8-6 12-14 14.5-8-2.5-14-6.5-14-14.5z" fill="#f5f5f5"/>
 <path d="M1966.5 1551.5v28M1952.6 1566h28" stroke="#222" stroke-width="2"/>
 <path d="M1975 1565l7 14h-14z" fill="#f2c200"/>
 <ellipse cx="2007.7" cy="1565" rx="9.3" ry="13.5" fill="#1f7ce8"/>
 <path d="M2004 1559l8 8-4 4v-16l4 4-8 8" fill="none" stroke="#fff" stroke-width="1.6"/>
 <rect x="2037" y="1551.7" width="26" height="27.3" rx="2" fill="#1677f0"/>
 <path d="M2041 1569l5-6 4 4 5-6 5 7" fill="none" stroke="#fff" stroke-width="4" stroke-linejoin="round"/>
 <rect x="2086" y="1551" width="12" height="20" rx="3" fill="#fff"/>
 <path d="M2084 1566a8 8 0 0 0 16 0M2092 1574v5M2088 1579h8" fill="none" stroke="#ccc" stroke-width="1.4"/>
 <rect x="2122.8" y="1559.4" width="23" height="14" fill="none" stroke="#fff" stroke-width="2"/>
 <rect x="2146" y="1563" width="2.5" height="6.5" fill="#fff"/>
 <rect x="2125" y="1561.5" width="12" height="10" fill="#fff"/>
 <path d="M2164 1560h5l7-6v20l-7-6h-5z" fill="none" stroke="#fff" stroke-width="1.6"/>
 <path d="M2179 1560a6 6 0 0 1 0 8M2182 1557a10 10 0 0 1 0 14M2185 1554a14 14 0 0 1 0 20" fill="none" stroke="#ddd" stroke-width="1.5"/>
 <path d="M2211 1576a20 20 0 0 1 20-20M2216 1576a15 15 0 0 1 15-15M2221 1576a10 10 0 0 1 10-10" fill="none" stroke="#ccc" stroke-width="1.5"/>
 <circle cx="2229" cy="1574" r="1.8" fill="#fff"/>
 <circle cx="2309.2" cy="1565" r="13.5" fill="#fff" stroke="#3c5fe0" stroke-width="3"/>
 <text x="2298" y="1569.5" font-size="9" font-weight="bold" fill="#3c5fe0">iFLY</text>
 <path d="M2489 1552.5h26.5v21h-11l-4 4-3-4h-8.5z" fill="none" stroke="#fff" stroke-width="2"/>
 <path d="M2512 1566a6 6 0 1 0 4 8 5 5 0 0 1 -4 -8z" fill="none" stroke="#fff" stroke-width="1.8"/>
</svg>
<div class="t" style="left:2244px;top:1551px;font-size:25px;font-weight:bold;color:#fff">中</div>
<div class="t" style="left:2376.4px;top:1539.1px;font-size:23.5px;color:#fff;transform:scaleX(0.9165);transform-origin:0 0;">21:02</div>
<div class="t" style="left:2352.8px;top:1571.5px;font-size:23px;color:#fff;">2022/2/15</div>
<!--/TK-->

<!-- tencent toolbar -->
<div id="tm" class="a" style="left:636px;top:0;width:1287px;height:142px;background:#fff;box-shadow:0 2px 6px rgba(0,0,0,.25)"></div>
<!--TM-->
<svg class="a" style="left:636px;top:0" width="1287" height="142" viewBox="636 0 1287 142">
 <!-- signal -->
 <rect x="1164" y="24.5" width="4" height="8" fill="#21c17b"/>
 <rect x="1171.8" y="21" width="4" height="11.5" fill="#21c17b"/>
 <rect x="1179.6" y="17.7" width="4.2" height="14.8" fill="#21c17b"/>
 <!-- mic -->
 <rect x="731" y="58" width="14" height="28.5" rx="7" fill="#404246"/>
 <path d="M731 79.5h14v0.5a7 7 0 0 1 -14 0z" fill="#21c17b"/>
 <path d="M725.5 78a12.5 13.5 0 0 0 25 0" fill="none" stroke="#404246" stroke-width="3.2"/>
 <rect x="736.5" y="91" width="3.2" height="6" fill="#404246"/>
 <rect x="728" y="96.3" width="20.3" height="3.4" fill="#404246"/>
 <path d="M786 75h15.6l-7.8 9.6z" fill="#55575b"/>
 <!-- camera -->
 <rect x="831" y="65.2" width="29.7" height="27.8" rx="3.5" fill="#404246"/>
 <path d="M862.7 75.5l10.3-8.5v24l-10.3-8.5z" fill="#404246"/>
 <path d="M901 75h15.6l-7.8 9.6z" fill="#55575b"/>
 <!-- members -->
 <circle cx="979" cy="68.5" r="7.4" fill="#404246"/>
 <path d="M984 62.5a7.5 7.5 0 0 1 1.5 10" fill="none" stroke="#404246" stroke-width="1.2"/>
 <path d="M961 96v-4a17 14 0 0 1 34 0v4z" fill="#404246"/>
 <path d="M988 80a16 14 0 0 1 11 16" fill="none" stroke="#404246" stroke-width="1.3"/>
 <!-- chat -->
 <path d="M1070.5 64.6h29a3 3 0 0 1 3 3v22a3 3 0 0 1 -3 3h-4l-7 5.5v-5.5h-18a3 3 0 0 1 -3 -3v-22a3 3 0 0 1 3 -3z" fill="#505256"/>
 <circle cx="1075.8" cy="78.2" r="2.9" fill="#fff"/><circle cx="1084.9" cy="78.2" r="2.9" fill="#fff"/><circle cx="1094" cy="78.2" r="2.9" fill="#fff"/>
 <!-- more -->
 <circle cx="1177.3" cy="78" r="4.6" fill="#404246"/><circle cx="1192.2" cy="78" r="4.6" fill="#404246"/><circle cx="1207" cy="78" r="4.6" fill="#404246"/>
 <rect x="1270.5" y="58.5" width="1.5" height="58" fill="#e3e3e3"/>
 <!-- new share -->
 <rect x="1314" y="61.7" width="46.2" height="31.3" rx="2.5" fill="#5c5f63"/>
 <rect x="1323" y="98.7" width="27.8" height="3" fill="#5c5f63"/>
 <path d="M1328 85c2-8 8-12 16-12v-4l7 6.5-7 6.5v-4c-6 0-11 2-16 7z" fill="#fff"/>
 <path d="M1388 72h15.6l-7.8 9.6z" fill="#55575b"/>
 <!-- pause share -->
 <rect x="1439.6" y="60.5" width="46.4" height="31.5" rx="2.5" fill="#5c5f63"/>
 <rect x="1448.6" y="97" width="28.4" height="3.2" fill="#5c5f63"/>
 <rect x="1455.8" y="69.5" width="4.2" height="13.5" rx="1" fill="#fff"/>
 <rect x="1466.2" y="69.5" width="4.2" height="13.5" rx="1" fill="#fff"/>
 <!-- annotate -->
 <path d="M1562 63h18.5a3.5 3.5 0 0 1 3.5 3.5v31a3.5 3.5 0 0 1 -3.5 3.5h-31a3.5 3.5 0 0 1 -3.5 -3.5v-19" fill="none" stroke="#5c5f63" stroke-width="4"/>
 <path d="M1546 61.5l3-2.5 24 23.5 2.5 7-7-2.5z" fill="#5c5f63"/>
 <path d="M1616 72h16.7l-8.35 10z" fill="#55575b"/>
 <rect x="1656" y="57.8" width="1.5" height="59" fill="#e3e3e3"/>
 <rect x="1693.5" y="56.5" width="132" height="62" rx="3" fill="#fff" stroke="#e8606a" stroke-width="1.4"/>
</svg>
<div class="t" style="left:1206px;top:12px;font-size:26px;color:#111;transform:scaleX(.88);transform-origin:0 0">04:18</div>
<div class="t" style="left:1287px;top:15px;font-size:23px;color:#151515;-webkit-text-stroke:.3px #151515">腾讯会议</div>
<div class="t" style="left:719px;top:105px;font-size:19.5px;color:#333;-webkit-text-stroke:.15px #333">静音</div>
<div class="t" style="left:814px;top:105px;font-size:19.5px;color:#333;-webkit-text-stroke:.15px #333">停止视频</div>
<div class="t" style="left:928px;top:105px;font-size:19.5px;color:#333;-webkit-text-stroke:.15px #333">管理成员(3)</div>
<div class="t" style="left:1066px;top:105px;font-size:19.5px;color:#333;-webkit-text-stroke:.15px #333">聊天</div>
<div class="t" style="left:1172px;top:105px;font-size:19.5px;color:#333;-webkit-text-stroke:.15px #333">更多</div>
<div class="t" style="left:1298px;top:109px;font-size:19.5px;color:#333;-webkit-text-stroke:.15px #333">新的共享</div>
<div class="t" style="left:1424px;top:109px;font-size:19.5px;color:#333;-webkit-text-stroke:.15px #333">暂停共享</div>
<div class="t" style="left:1527px;top:109px;font-size:19.5px;color:#333;-webkit-text-stroke:.15px #333">互动批注</div>
<div class="t" style="left:1712px;top:78px;font-size:23px;color:#e5454f;-webkit-text-stroke:.3px #e5454f">结束共享</div>

<!--/TM-->

<!-- video panel -->
<!--VP-->
<div class="a" style="left:1954px;top:147px;width:427px;height:785px;background:#16191b"></div>
<div class="a" style="left:1954px;top:147px;width:427px;height:62px;background:#3a3e42"></div>
<svg class="a" style="left:1970px;top:160px" width="60" height="40" viewBox="1970 160 60 40">
 <rect x="1980.5" y="166" width="10" height="18" rx="5" fill="#9a9fa2"/>
 <path d="M1980.5 177h10v2a5 5 0 0 1 -10 0z" fill="#3fb38f"/>
 <path d="M1977 176a8.5 9 0 0 0 17 0" fill="none" stroke="#35997c" stroke-width="1.8"/>
 <rect x="1984.5" y="185" width="2" height="4" fill="#3cc8a0"/><rect x="1980" y="189" width="11" height="2" fill="#3cc8a0"/>
 <rect x="2013" y="152" width="2" height="47" fill="#30343a"/>
</svg>
<div class="t" style="left:2028px;top:168.5px;font-size:21px;color:#f3f3f3">正在讲话: 老师;</div>
<div class="a" style="left:2226px;top:162px;width:72px;height:36px;border-radius:45%;background:#56595c;filter:blur(6px)"></div>
<!-- video -->
<div class="a" style="left:1958px;top:214px;width:420px;height:236px;border:1px solid #22c38b;overflow:hidden;background:linear-gradient(180deg,#1f78d2 0%,#2f86da 35%,#5b9fe0 62%,#86b6e2 78%,#a8c8e4 75.5%,#b9cbd6 76%,#c3d0d8 100%)">
 <div class="a" style="left:0;top:0;width:420px;height:236px">
  <div class="a" style="left:30px;top:20px;width:160px;height:18px;border-radius:50%;background:rgba(190,215,240,.45);filter:blur(5px);transform:rotate(6deg)"></div>
  <div class="a" style="left:320px;top:120px;width:140px;height:30px;border-radius:50%;background:rgba(200,225,245,.45);filter:blur(8px)"></div>
  <div class="a" style="left:0;top:140px;width:420px;height:36px;background:rgba(200,225,245,.4);filter:blur(8px)"></div>
  <div class="a" style="left:5px;top:150px;width:130px;height:24px;border-radius:50%;background:rgba(235,245,255,.5);filter:blur(5px)"></div>
  <div class="a" style="left:240px;top:138px;width:180px;height:30px;border-radius:50%;background:rgba(225,238,250,.45);filter:blur(6px)"></div>
  <div class="a" style="left:270px;top:108px;width:130px;height:20px;border-radius:50%;background:rgba(210,230,250,.35);filter:blur(5px)"></div>
  <div class="a" style="left:60px;top:42px;width:120px;height:10px;border-radius:50%;background:rgba(200,225,250,.35);filter:blur(3px);transform:rotate(8deg)"></div>
  <div class="a" style="left:-2px;top:177px;width:424px;height:3px;background:#e6eef2;filter:blur(1px)"></div>
  <!-- shirt -->
  <div class="a" style="left:100px;top:172px;width:210px;height:95px;border-radius:42% 48% 0 0;background:repeating-linear-gradient(90deg,#3a3f4e 0 8px,#a8979f 8px 11px,#474b5a 11px 19px,#c9b8bf 19px 21px),#3b4152;filter:blur(.8px)"></div>
  <div class="a" style="left:100px;top:172px;width:210px;height:95px;border-radius:42% 48% 0 0;background:repeating-linear-gradient(0deg,rgba(35,40,55,.5) 0 7px,rgba(220,190,200,.3) 7px 10px)"></div>
  <!-- neck -->
  <div class="a" style="left:150px;top:165px;width:60px;height:30px;border-radius:0 0 45% 45%;background:#8f6e60;filter:blur(1px)"></div>
  <!-- hair -->
  <div class="a" style="left:127px;top:47px;width:114px;height:112px;border-radius:46% 50% 38% 42%;background:#28221f;filter:blur(1px)"></div>
  <!-- face -->
  <div class="a" style="left:136px;top:80px;width:92px;height:106px;border-radius:40% 40% 50% 50%;background:radial-gradient(ellipse at 50% 38%,#e6c6ae 0%,#d2ab92 50%,#a8816c 100%);filter:blur(.8px)"></div>
  <div class="a" style="left:140px;top:68px;width:70px;height:26px;border-radius:50% 60% 30% 10%;background:#2b2420;transform:rotate(-8deg);filter:blur(1px)"></div>
  <div class="a" style="left:150px;top:114px;width:22px;height:6px;border-radius:50%;background:#5d4238;filter:blur(.8px)"></div>
  <div class="a" style="left:192px;top:114px;width:22px;height:6px;border-radius:50%;background:#5d4238;filter:blur(.8px)"></div>
  <div class="a" style="left:172px;top:118px;width:16px;height:32px;border-radius:45%;background:#efd6c2;filter:blur(2px)"></div>
  <div class="a" style="left:166px;top:160px;width:30px;height:5px;border-radius:50%;background:#7e5a50;filter:blur(.8px)"></div>
  <div class="a" style="left:122px;top:104px;width:12px;height:46px;border-radius:40%;background:#1c1a1a;filter:blur(.6px)"></div>
  <div class="a" style="left:228px;top:104px;width:12px;height:46px;border-radius:40%;background:#1c1a1a;filter:blur(.6px)"></div>
  <div class="a" style="left:128px;top:150px;width:36px;height:3px;background:#222;transform:rotate(32deg);transform-origin:0 0"></div>
 </div>
 <div class="a" style="left:1px;top:193px;width:42px;height:41px;background:#f58220"></div>
 <div class="a" style="left:43px;top:193px;width:94px;height:41px;background:rgba(30,33,38,.88)"></div>
</div>
<svg class="a" style="left:1958px;top:400px" width="150" height="50" viewBox="1958 400 150 50">
 <circle cx="1981" cy="421" r="5.5" fill="#fff"/>
 <path d="M1968.5 441l3-7a10 6 0 0 1 19 0l3 7z" fill="#fff"/>
 <rect x="2013.5" y="417" width="10" height="17" rx="5" fill="#fff"/>
 <path d="M2009.5 428a8.5 8.5 0 0 0 17 0" fill="none" stroke="#fff" stroke-width="2.2"/>
 <rect x="2017.4" y="436" width="2.2" height="5" fill="#fff"/>
</svg>
<div class="t" style="left:2034px;top:417px;font-size:28px;color:#fff">老师</div>
<!-- anna -->
<div class="a" style="left:1956px;top:453px;width:423px;height:237px;background:#2d2f31"></div>
<div class="a" style="left:2109.5px;top:491.5px;width:117px;height:117px;border-radius:50%;background:#fff"></div>
<svg class="a" style="left:2130px;top:525px" width="80" height="60" viewBox="0 0 80 60">
 <ellipse cx="38" cy="26" rx="9" ry="8" fill="#dbeaf5" stroke="#7a9ab0" stroke-width="1"/>
 <path d="M33 19l-1-9 3 8M40 18l2-9 1 9" fill="none" stroke="#7a9ab0" stroke-width="1"/>
 <path d="M17 50c10-5 35-5 47-2" fill="none" stroke="#999" stroke-width="1"/>
 <path d="M19 53c14 2 30 1 42-1" fill="none" stroke="#aaa" stroke-width="1"/>
</svg>
<div class="a" style="left:1959px;top:647px;width:106px;height:41px;background:#131415"></div>
<svg class="a" style="left:1958px;top:650px" width="30" height="36" viewBox="0 0 30 36">
 <rect x="9" y="5" width="9" height="16" rx="4.5" fill="#fff"/>
 <path d="M5.5 15a8 8 0 0 0 16 0" fill="none" stroke="#fff" stroke-width="2"/>
 <rect x="12.5" y="23" width="2" height="5" fill="#fff"/>
 <path d="M4 28L24 6" stroke="#e0454a" stroke-width="2.2"/>
</svg>
<div class="t" style="left:1989px;top:654px;font-size:29px;color:#fff">Anna</div>
<div class="a" style="left:1956px;top:694px;width:423px;height:236px;background:#2d2f31"></div>
<div class="a" style="left:2109.5px;top:732px;width:117px;height:117px;border-radius:50%;background:#f7f1d6;overflow:hidden">
 <svg class="a" style="left:0;top:0" width="117" height="117" viewBox="0 0 117 117">
  <path d="M28 66l80-16" stroke="#d9cfa8" stroke-width="2.5"/>
  <path d="M3 57l26 7M4 61l6 14M9 62l6 14M14 63l6 13M19 64l6 12M24 65l5 10" stroke="#9c9a6a" stroke-width="2.2" fill="none"/>
  <path d="M45 99l8-6 28 0 14 6-4 9-40 2z" fill="#d24ca2"/>
  <path d="M64 70c10-4 24-2 28 6l2 24-30 0z" fill="#f2d3ba"/>
  <path d="M20 84c4-12 18-18 30-18l14 2 2 34-12 6c-12 0-28-6-34-10z" fill="#9b3aa6"/>
  <path d="M26 78l10 10M30 92l10 10M44 72l10 10M40 86l12 12" stroke="#e04aa8" stroke-width="4"/>
  <path d="M77 62c10-2 18 6 20 16l-2 18-6-2-10-18z" fill="#8e3aa0"/>
  <path d="M84 66l8 10M82 80l8 10" stroke="#d84aa6" stroke-width="3"/>
  <path d="M28 58c8-10 18-16 26-16l-2 16c-8 2-16 2-24 0z" fill="#ecd2b6" stroke="#9c8a6a" stroke-width="1"/>
  <path d="M80 40c6-4 12-4 14 0-4 4-8 6-14 6z" fill="#ecd2b6" stroke="#9c8a6a" stroke-width="1"/>
  <ellipse cx="67" cy="50" rx="16" ry="15.5" fill="#f0d8bc"/>
  <ellipse cx="73.5" cy="49.5" rx="7" ry="6" fill="#e9ad92" stroke="#a36b5a" stroke-width="1"/>
  <path d="M52 28c8-10 20-14 26-14 2 8 0 16-2 24-8-4-18-4-24 0z" fill="#7a2a8a"/>
  <path d="M58 26l8-4M66 30l8-6" stroke="#b04ab0" stroke-width="2"/>
  <circle cx="76" cy="79" r="6.5" fill="#a8252c"/>
 </svg>
</div>
<div class="a" style="left:1959px;top:887px;width:128px;height:42px;background:#131415"></div>
<svg class="a" style="left:1958px;top:890px" width="30" height="36" viewBox="0 0 30 36">
 <rect x="9" y="5" width="9" height="16" rx="4.5" fill="#fff"/>
 <path d="M5.5 15a8 8 0 0 0 16 0" fill="none" stroke="#fff" stroke-width="2"/>
 <rect x="12.5" y="23" width="2" height="5" fill="#fff"/>
</svg>
<div class="t" style="left:1987px;top:894px;font-size:29px;color:#fff">Eeyore</div>

<!--/VP-->

<!-- green share borders -->
<div class="a green" style="left:0;top:0;width:120px;height:6px"></div>
<div class="a green" style="left:0;top:0;width:6px;height:120px"></div>
<div class="a green" style="left:2440px;top:0;width:120px;height:6px"></div>
<div class="a green" style="left:2554px;top:0;width:6px;height:120px"></div>
<div class="a green" style="left:0;top:1594px;width:120px;height:6px"></div>
<div class="a green" style="left:0;top:1480px;width:6px;height:120px"></div>
<div class="a green" style="left:2440px;top:1594px;width:120px;height:6px"></div>
<div class="a green" style="left:2554px;top:1480px;width:6px;height:120px"></div>
</body></html>
